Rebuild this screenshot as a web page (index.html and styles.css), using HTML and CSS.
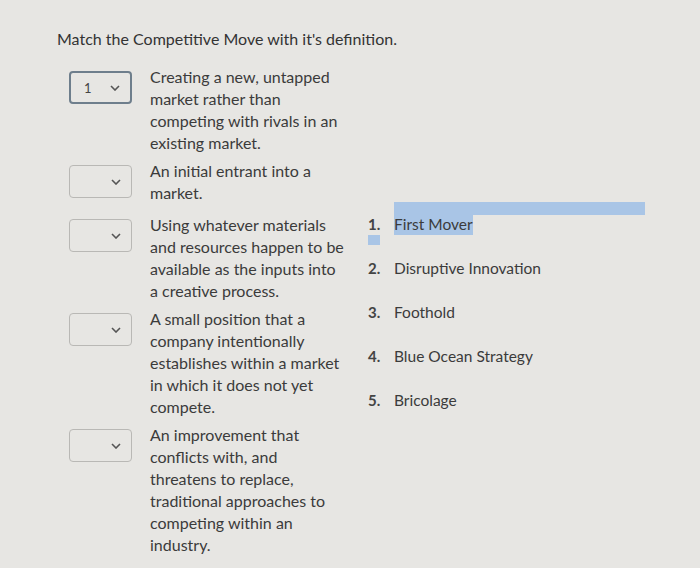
FILE: index.html
```html
<!DOCTYPE html>
<html>
<head>
<meta charset="utf-8">
<link rel="stylesheet" href="styles.css">
</head>
<body>
<div class="page">
  <h1 class="title">Match the Competitive Move with it's definition.</h1>
  <div class="match">
    <div class="defs">
      <div class="row">
        <div class="select focused"><span class="val">1</span><svg class="chev" width="10" height="6" viewBox="0 0 10 6"><path d="M1 1 L5 5 L9 1" fill="none" stroke="#555" stroke-width="1.6"/></svg></div>
        <p class="def">Creating a new, untapped market rather than competing with rivals in an existing market.</p>
      </div>
      <div class="row">
        <div class="select"><span class="val"></span><svg class="chev" width="10" height="6" viewBox="0 0 10 6"><path d="M1 1 L5 5 L9 1" fill="none" stroke="#555" stroke-width="1.6"/></svg></div>
        <p class="def">An initial entrant into a market.</p>
      </div>
      <div class="row spaced">
        <div class="select"><span class="val"></span><svg class="chev" width="10" height="6" viewBox="0 0 10 6"><path d="M1 1 L5 5 L9 1" fill="none" stroke="#555" stroke-width="1.6"/></svg></div>
        <p class="def">Using whatever materials and resources happen to be available as the inputs into a creative process.</p>
      </div>
      <div class="row">
        <div class="select"><span class="val"></span><svg class="chev" width="10" height="6" viewBox="0 0 10 6"><path d="M1 1 L5 5 L9 1" fill="none" stroke="#555" stroke-width="1.6"/></svg></div>
        <p class="def">A small position that a company intentionally establishes within a market in which it does not yet compete.</p>
      </div>
      <div class="row">
        <div class="select"><span class="val"></span><svg class="chev" width="10" height="6" viewBox="0 0 10 6"><path d="M1 1 L5 5 L9 1" fill="none" stroke="#555" stroke-width="1.6"/></svg></div>
        <p class="def">An improvement that conflicts with, and threatens to replace, traditional approaches to competing within an industry.</p>
      </div>
    </div>
    <ol class="choices">
      <li class="choice selected"><span class="num">1.</span><span class="label">First Mover</span></li>
      <li class="choice"><span class="num">2.</span><span class="label">Disruptive Innovation</span></li>
      <li class="choice"><span class="num">3.</span><span class="label">Foothold</span></li>
      <li class="choice"><span class="num">4.</span><span class="label">Blue Ocean Strategy</span></li>
      <li class="choice"><span class="num">5.</span><span class="label">Bricolage</span></li>
    </ol>
  </div>
</div>
</body>
</html>
```

FILE: styles.css
```css
html, body {
  margin: 0;
  padding: 0;
}
body {
  background: #e7e6e3;
  font-family: Lato, "Open Sans", sans-serif;
  color: #3b3b3b;
}
.page {
  width: 700px;
  height: 568px;
  overflow: hidden;
  padding: 28px 0 0 57px;
  box-sizing: border-box;
}
.title {
  margin: 0;
  font-size: 16px;
  font-weight: 400;
  line-height: 22px;
  color: #333;
}
.match {
  display: flex;
  margin-top: 16px;
}
.defs {
  width: 309px;
  display: flex;
  flex-direction: column;
  gap: 6px;
}
.row {
  display: flex;
  align-items: flex-start;
}
.row.spaced {
  margin-top: 4px;
}
.select {
  width: 63px;
  height: 33px;
  box-sizing: border-box;
  margin: 5px 0 0 12px;
  border: 1.5px solid #b9b8b5;
  border-radius: 4px;
  display: flex;
  align-items: center;
  justify-content: space-between;
  padding: 0 10px 0 13px;
  flex-shrink: 0;
}
.select.focused {
  border: 2px solid #6e7e8c;
}
.val {
  font-size: 13px;
  color: #444;
}
.def {
  margin: 0 0 0 18px;
  font-size: 16px;
  line-height: 22px;
  width: 195px;
}
.choices {
  list-style: none;
  margin: 147px 0 0 0;
  padding: 0 0 0 2px;
  display: flex;
  flex-direction: column;
  gap: 22px;
}
.choice {
  display: flex;
  font-size: 15.5px;
  line-height: 22px;
  position: relative;
}
.num {
  width: 26px;
  color: #444;
  font-weight: 700;
  font-size: 15px;
}
.selected .label {
  background: #a9c5e6;
}
.selected::before {
  content: "";
  position: absolute;
  left: 26px;
  top: -11px;
  width: 251px;
  height: 13px;
  background: #a9c5e6;
}
.selected::after {
  content: "";
  position: absolute;
  left: 0;
  top: 22px;
  width: 12px;
  height: 10px;
  background: #a9c5e6;
}
```
